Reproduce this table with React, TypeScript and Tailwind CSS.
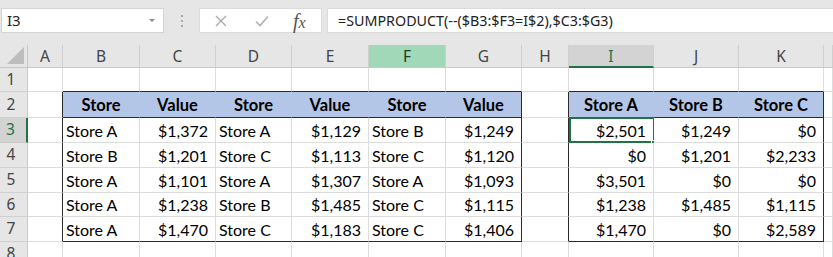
const COLS = ["A", "B", "C", "D", "E", "F", "G", "H", "I", "J", "K", "L"];

const LEFT = [
  ["Store A", "$1,372", "Store A", "$1,129", "Store B", "$1,249"],
  ["Store B", "$1,201", "Store C", "$1,113", "Store C", "$1,120"],
  ["Store A", "$1,101", "Store A", "$1,307", "Store A", "$1,093"],
  ["Store A", "$1,238", "Store B", "$1,485", "Store C", "$1,115"],
  ["Store A", "$1,470", "Store C", "$1,183", "Store C", "$1,406"],
];
const LEFT_HEAD = ["Store", "Value", "Store", "Value", "Store", "Value"];

const RIGHT = [
  ["$2,501", "$1,249", "$0"],
  ["$0", "$1,201", "$2,233"],
  ["$3,501", "$0", "$0"],
  ["$1,238", "$1,485", "$1,115"],
  ["$1,470", "$0", "$2,589"],
];
const RIGHT_HEAD = ["Store A", "Store B", "Store C"];

const cellFont = { fontFamily: "Lato, 'Liberation Sans', sans-serif" };
const uiFont = { fontFamily: "'Noto Sans', 'Open Sans', sans-serif" };

function FormulaBar() {
  return (
    <div className="flex h-[45px] shrink-0 items-start bg-[#e6e6e6] pt-[8px]" style={uiFont}>
      {/* name box */}
      <div className="ml-[1px] flex h-[25px] w-[163px] items-center justify-between border border-[#d4d4d4] bg-white pl-[5px] pr-[8px] text-[15px] text-[#222]">
        <span>I3</span>
        <svg width="6" height="4" viewBox="0 0 6 4">
          <path d="M0 0 L6 0 L3 3 Z" fill="#8a8a8a" />
        </svg>
      </div>
      <div className="flex h-[25px] w-[35px] flex-col items-center justify-center gap-[3px]">
        <span className="h-[2px] w-[2px] bg-[#a8a8a8]" />
        <span className="h-[2px] w-[2px] bg-[#a8a8a8]" />
        <span className="h-[2px] w-[2px] bg-[#a8a8a8]" />
      </div>
      {/* cancel / enter / fx */}
      <div className="flex h-[25px] w-[123px] items-center border border-[#dcdcdc] bg-white">
        <svg className="ml-[15px]" width="12" height="12" viewBox="0 0 12 12">
          <path d="M1 1 L11 11 M11 1 L1 11" stroke="#a9a9a9" strokeWidth="1.3" fill="none" />
        </svg>
        <svg className="ml-[28px]" width="14" height="12" viewBox="0 0 14 12">
          <path d="M1 6.5 L5 10.5 L13 1.5" stroke="#b0b0b0" strokeWidth="1.6" fill="none" />
        </svg>
        <span
          className="ml-[24px] text-[20px] italic leading-none text-[#555]"
          style={{ fontFamily: "'Liberation Serif', serif" }}
        >
          f<span className="text-[16px]">x</span>
        </span>
      </div>
      <div className="ml-[5px] flex h-[25px] flex-1 items-center border border-r-0 border-[#dcdcdc] bg-white pl-[10px] text-[14.3px] text-[#222]">
        =SUMPRODUCT(--($B3:$F3=I$2),$C3:$G3)
      </div>
    </div>
  );
}

function ColumnHeaders() {
  return (
    <>
      <div className="flex items-end justify-end border-b border-r border-[#c8c8c8] bg-[#e6e6e6] pb-[3px] pr-[3px]">
        <svg width="17" height="17" viewBox="0 0 17 17">
          <path d="M17 0 L17 17 L0 17 Z" fill="#bdbdbd" />
        </svg>
      </div>
      {COLS.map((c) => {
        const base = "flex items-center justify-center pt-[2px] text-[15.5px] border-r border-[#cfcfcf]";
        if (c === "F")
          return (
            <div key={c} className={base + " border-b border-b-[#c8c8c8] bg-[#a0d8b8] text-[#1d3a2a]"}>
              {c}
            </div>
          );
        if (c === "I")
          return (
            <div key={c} className={base + " border-b-2 border-b-[#217346] bg-[#d3d3d3] text-[#217346]"}>
              {c}
            </div>
          );
        return (
          <div key={c} className={base + " border-b border-b-[#c8c8c8] bg-[#e6e6e6] text-[#444]"}>
            {c === "L" ? null : c}
          </div>
        );
      })}
    </>
  );
}

function Cell({ r, c }: { r: number; c: number }) {
  const inLeft = c >= 1 && c <= 6 && r >= 2 && r <= 7;
  const inRight = c >= 8 && c <= 10 && r >= 2 && r <= 7;
  const inTable = inLeft || inRight;
  const isHead = inTable && r === 2;
  const rowsOfTable = r >= 2 && r <= 7;

  // right edge of this cell
  let rightCls = "border-r-[#dcdcdc]";
  if (rowsOfTable && (c === 0 || c === 6 || c === 7 || c === 10)) rightCls = "border-r-[#2a2a2a]";
  else if (isHead) rightCls = "border-r-[#b4c6e7]";

  // bottom edge of this cell
  let bottomCls = "border-b-[#dcdcdc]";
  const tableCol = (c >= 1 && c <= 6) || (c >= 8 && c <= 10);
  if (r === 1 && tableCol) bottomCls = "border-b-[#2a2a2a]";
  else if (inTable && (r === 2 || r === 7)) bottomCls = "border-b-[#2a2a2a]";

  let content: React.ReactNode = null;
  let align = "justify-start pl-[3px]";
  if (isHead) {
    const text = inLeft ? LEFT_HEAD[c - 1] : RIGHT_HEAD[c - 8];
    content = <span className="text-[16.5px] font-bold">{text}</span>;
    align = "justify-center";
  } else if (inLeft) {
    const v = LEFT[r - 3][c - 1];
    content = v;
    if (v.startsWith("$")) align = "justify-end pr-[7px]";
  } else if (inRight) {
    content = RIGHT[r - 3][c - 8];
    align = "justify-end pr-[7px]";
  }

  const selected = r === 3 && c === 8;

  return (
    <div
      className={[
        "relative flex items-end border-b border-r pb-[3px] text-[16px] leading-none text-black",
        isHead ? "bg-[#b4c6e7] pb-[4px]" : "bg-white",
        rightCls,
        bottomCls,
        align,
      ].join(" ")}
      style={cellFont}
    >
      {content}
      {selected && (
        <>
          <div className="absolute left-[0px] top-[-1px] h-[26px] w-[86px] border-2 border-[#217346]" />
          <div className="absolute right-[-4px] bottom-[-4px] h-[6px] w-[6px] border border-white bg-[#217346]" />
        </>
      )}
    </div>
  );
}

function RowHeader({ r }: { r: number }) {
  const active = r === 3;
  return (
    <div
      className={[
        "flex items-center justify-center pr-[5px] text-[15.5px]",
        active
          ? "border-b border-b-[#c8c8c8] border-r-2 border-r-[#217346] bg-[#d3d3d3] text-[#217346]"
          : "border-b border-r border-b-[#d0d0d0] border-r-[#c8c8c8] bg-[#e6e6e6] text-[#444]",
      ].join(" ")}
      style={uiFont}
    >
      {r}
    </div>
  );
}

export default function App() {
  const rows = [1, 2, 3, 4, 5, 6, 7, 8];
  return (
    <div className="flex h-[257px] w-[833px] flex-col overflow-hidden bg-white">
      <FormulaBar />
      <div
        className="grid shrink-0 grid-cols-[28px_35px_77px_76px_76px_77px_77px_76px_47px_85px_85px_85px_1fr] grid-rows-[23px_24px_26px_25px_25px_25px_24px_25px_25px]"
        style={uiFont}
      >
        <ColumnHeaders />
        {rows.map((r) => (
          <div key={r} className="contents">
            <RowHeader r={r} />
            {COLS.map((_, c) => (
              <Cell key={c} r={r} c={c} />
            ))}
          </div>
        ))}
      </div>
    </div>
  );
}
